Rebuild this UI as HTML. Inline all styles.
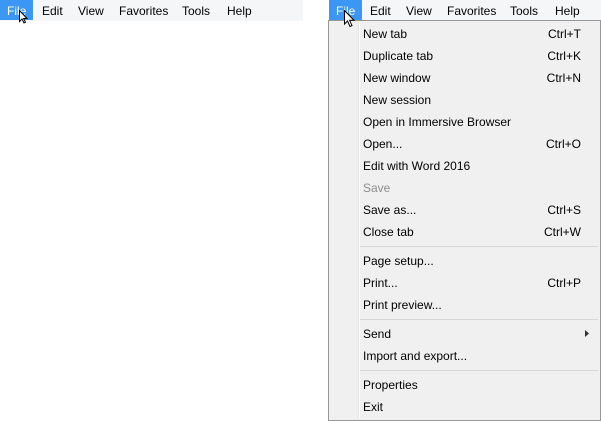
<!DOCTYPE html>
<html><head><style>
body{margin:0;width:601px;height:421px;background:#fff;position:relative;overflow:hidden;font-family:"Liberation Sans",sans-serif;font-size:12px;color:#000}
.bar{position:absolute;top:0;height:21px;background:#f5f6f7}
.mi{position:absolute;top:4px;white-space:nowrap}
.hl{position:absolute;top:0;height:20px;background:#3c97f4}
.menu{position:absolute;left:328px;top:20px;width:271px;height:399px;background:#f0f0f0;border:1px solid #979797}
.gut{position:absolute;left:29px;top:2px;bottom:2px;width:1px;background:#e3e3e3;border-right:1px solid #fff}
.it{position:absolute;left:34px;width:218px;height:22px;line-height:22px}
.it span{position:absolute;right:0;top:0}
.sep{position:absolute;left:31px;right:2px;height:1px;background:#d7d7d7}
</style></head><body>
<div class="bar" style="left:0;width:303px"></div>
<div class="hl" style="left:0;width:33px"></div>
<div class="mi" style="left:7px;color:#fff">File</div>
<div class="mi" style="left:42px">Edit</div>
<div class="mi" style="left:78px">View</div>
<div class="mi" style="left:119px">Favorites</div>
<div class="mi" style="left:182px">Tools</div>
<div class="mi" style="left:227px">Help</div>
<svg style="position:absolute;left:19px;top:10px" width="10" height="14"><path d="M0.5 0.5V11.5L3 9L5 13L6.5 12.3L4.6 8.5H8Z" fill="#fff" stroke="#000"/></svg>

<div class="bar" style="left:329px;width:272px"></div>
<div class="hl" style="left:329px;width:33px"></div>
<div class="mi" style="left:336px;color:#fff">File</div>
<div class="mi" style="left:370px">Edit</div>
<div class="mi" style="left:406px">View</div>
<div class="mi" style="left:447px">Favorites</div>
<div class="mi" style="left:510px">Tools</div>
<div class="mi" style="left:555px">Help</div>
<div class="menu">
<div class="gut"></div>
<div class="it" style="top:2px">New tab<span>Ctrl+T</span></div>
<div class="it" style="top:24px">Duplicate tab<span>Ctrl+K</span></div>
<div class="it" style="top:46px">New window<span>Ctrl+N</span></div>
<div class="it" style="top:68px">New session</div>
<div class="it" style="top:90px">Open in Immersive Browser</div>
<div class="it" style="top:112px">Open...<span>Ctrl+O</span></div>
<div class="it" style="top:134px">Edit with Word 2016</div>
<div class="it" style="top:156px;color:#8d8d8d">Save</div>
<div class="it" style="top:178px">Save as...<span>Ctrl+S</span></div>
<div class="it" style="top:200px">Close tab<span>Ctrl+W</span></div>
<div class="sep" style="top:225px"></div>
<div class="it" style="top:229px">Page setup...</div>
<div class="it" style="top:251px">Print...<span>Ctrl+P</span></div>
<div class="it" style="top:273px">Print preview...</div>
<div class="sep" style="top:298px"></div>
<div class="it" style="top:302px">Send</div>
<svg style="position:absolute;left:256px;top:309px" width="5" height="7"><path d="M0 0L4 3.5L0 7Z" fill="#333"/></svg>
<div class="it" style="top:324px">Import and export...</div>
<div class="sep" style="top:349px"></div>
<div class="it" style="top:353px">Properties</div>
<div class="it" style="top:375px">Exit</div>
</div>
<svg style="position:absolute;left:344px;top:10px" width="12" height="18"><path d="M0.5 0.5V14L3.5 11L6 16.5L8 15.6L5.6 10.3H10Z" fill="#fff" stroke="#000"/></svg>
</body></html>
